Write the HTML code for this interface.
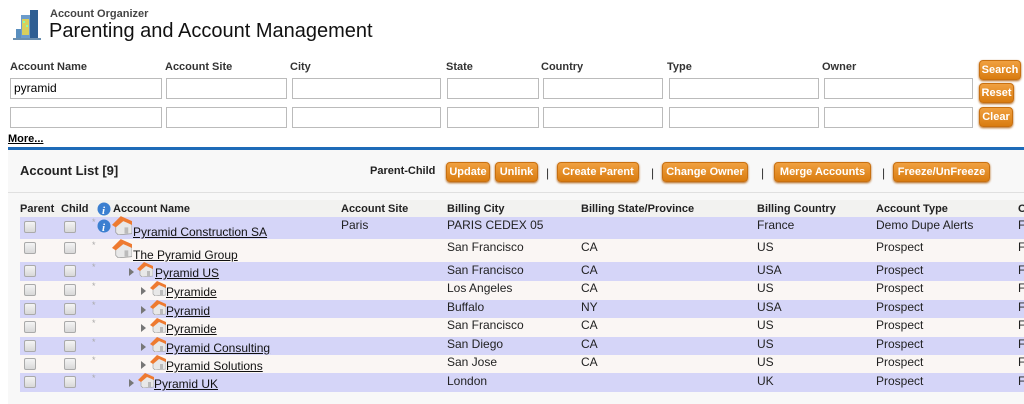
<!DOCTYPE html>
<html><head><style>
*{margin:0;padding:0;box-sizing:border-box}
body{width:1024px;height:404px;background:#fff;font-family:"Liberation Sans",Arial,sans-serif;font-size:12px;color:#000;position:relative;overflow:hidden}
.a{position:absolute;white-space:nowrap}
.lbl{font-weight:bold;font-size:11px;color:#333}
.in{position:absolute;height:21px;border:1px solid #bbb;background:#fff;font-size:12px;padding:2px 3px}
.btn{position:absolute;height:20px;border-radius:4px;background:linear-gradient(#f0a040,#d97c10);color:#fff;font-weight:bold;font-size:11px;text-align:center;line-height:19px;box-shadow:0 1px 2px #b06010;border:1px solid #c87010}
.row{position:absolute;left:20px;width:1004px}
.cb{position:absolute;width:12px;height:12px;border:1px solid #aaa;border-radius:2px;background:linear-gradient(#f4f4f4,#d8d8d8)}
.star{position:absolute;color:#aaa;font-size:9px}
.t{position:absolute;font-size:12px;color:#222}
.nm{position:absolute;text-decoration:underline;color:#111;font-size:12px}
.arr{position:absolute;width:0;height:0;border-left:5px solid #777;border-top:4px solid transparent;border-bottom:4px solid transparent}
.pipe{position:absolute;top:166px;color:#333;font-size:12px}
.hd{position:absolute;top:203px;font-weight:bold;font-size:11px;color:#222}
</style></head><body>
<svg class="a" style="left:11px;top:7px" width="32" height="34" viewBox="0 0 32 34">
<rect x="10" y="8" width="14" height="24" fill="#6c9ccc"/>
<polygon points="19,3 27,3 27,32 19,32" fill="#2f5f93"/>
<rect x="11" y="12" width="7" height="16" fill="#d9cf5c"/>
<rect x="12" y="14" width="2" height="2" fill="#8fa"/><rect x="15" y="18" width="2" height="2" fill="#8fa"/>
<rect x="5" y="22" width="5" height="10" fill="#5a8fbf"/>
<rect x="2" y="31" width="28" height="2" fill="#6a8fb0"/>
</svg>
<div class="a" style="left:50px;top:8px;font-size:11px;font-weight:bold;color:#444">Account Organizer</div>
<div class="a" style="left:49px;top:20px;font-size:20px;color:#111">Parenting and Account Management</div>

<div class="a lbl" style="left:10px;top:61px">Account Name</div>
<div class="a lbl" style="left:165px;top:61px">Account Site</div>
<div class="a lbl" style="left:290px;top:61px">City</div>
<div class="a lbl" style="left:446px;top:61px">State</div>
<div class="a lbl" style="left:541px;top:61px">Country</div>
<div class="a lbl" style="left:667px;top:61px">Type</div>
<div class="a lbl" style="left:822px;top:61px">Owner</div>

<div class="in" style="left:10px;top:78px;width:152px">pyramid</div>
<div class="in" style="left:166px;top:78px;width:121px"></div>
<div class="in" style="left:292px;top:78px;width:149px"></div>
<div class="in" style="left:447px;top:78px;width:92px"></div>
<div class="in" style="left:543px;top:78px;width:120px"></div>
<div class="in" style="left:669px;top:78px;width:150px"></div>
<div class="in" style="left:824px;top:78px;width:149px"></div>
<div class="in" style="left:10px;top:107px;width:152px"></div>
<div class="in" style="left:166px;top:107px;width:121px"></div>
<div class="in" style="left:292px;top:107px;width:149px"></div>
<div class="in" style="left:447px;top:107px;width:92px"></div>
<div class="in" style="left:543px;top:107px;width:120px"></div>
<div class="in" style="left:669px;top:107px;width:150px"></div>
<div class="in" style="left:824px;top:107px;width:149px"></div>

<div class="btn" style="left:979px;top:60px;width:42px">Search</div>
<div class="btn" style="left:979px;top:83px;width:35px">Reset</div>
<div class="btn" style="left:979px;top:107px;width:34px">Clear</div>

<div class="a" style="left:8px;top:133px;font-size:11px;font-weight:bold;text-decoration:underline">More...</div>
<div class="a" style="left:8px;top:147px;width:1016px;height:3px;background:#1e6bb8"></div>
<div class="a" style="left:8px;top:150px;width:1016px;height:254px;background:#f8f8f8"></div>
<div class="a" style="left:8px;top:192px;width:1016px;height:1px;background:#e0e0e0"></div>
<div class="a" style="left:20px;top:200px;width:1004px;height:17px;background:#f2f2f0"></div>
<div class="a" style="left:20px;top:163px;font-weight:bold;font-size:13px;color:#222">Account List [9]</div>

<div class="a lbl" style="left:370px;top:165px;color:#222">Parent-Child</div>
<div class="btn" style="left:446px;top:162px;width:44px">Update</div>
<div class="btn" style="left:495px;top:162px;width:43px">Unlink</div>
<div class="pipe" style="left:546px">|</div>
<div class="btn" style="left:557px;top:162px;width:82px">Create Parent</div>
<div class="pipe" style="left:651px">|</div>
<div class="btn" style="left:662px;top:162px;width:86px">Change Owner</div>
<div class="pipe" style="left:761px">|</div>
<div class="btn" style="left:774px;top:162px;width:97px">Merge Accounts</div>
<div class="pipe" style="left:882px">|</div>
<div class="btn" style="left:893px;top:162px;width:97px">Freeze/UnFreeze</div>

<div class="hd" style="left:20px">Parent</div>
<div class="hd" style="left:61px">Child</div>
<svg class="a" style="left:97px;top:202px" width="14" height="14"><circle cx="7" cy="7" r="6.5" fill="#3b7fd0"/><text x="5" y="12" font-size="11" font-style="italic" font-weight="bold" fill="#fff" font-family="Liberation Serif">i</text></svg>
<div class="hd" style="left:113px">Account Name</div>
<div class="hd" style="left:341px">Account Site</div>
<div class="hd" style="left:447px">Billing City</div>
<div class="hd" style="left:581px">Billing State/Province</div>
<div class="hd" style="left:757px">Billing Country</div>
<div class="hd" style="left:876px">Account Type</div>
<div class="hd" style="left:1018px">O</div>

<div class="row" style="top:217px;height:22px;background:#d5d5f8"></div>
<div class="row" style="top:239px;height:23px;background:#faf6f4"></div>
<div class="row" style="top:262px;height:19px;background:#d5d5f8"></div>
<div class="row" style="top:281px;height:19px;background:#faf6f4"></div>
<div class="row" style="top:300px;height:18px;background:#d5d5f8"></div>
<div class="row" style="top:318px;height:19px;background:#faf6f4"></div>
<div class="row" style="top:337px;height:18px;background:#d5d5f8"></div>
<div class="row" style="top:355px;height:18px;background:#faf6f4"></div>
<div class="row" style="top:373px;height:19px;background:#d5d5f8"></div>

<svg width="0" height="0" style="position:absolute"><defs>
<symbol id="h" viewBox="0 0 16 15"><polygon points="3,7 10,3 16,7 16,14 5,15 3,13" fill="#e8e8e8" stroke="#999" stroke-width=".6"/><polygon points="0,7 7,0 16,4 16,7 9,4 3,9" fill="#ee7a30"/><rect x="10" y="9" width="3" height="5" fill="#bbb"/></symbol>
</defs></svg>

<div class="cb" style="left:24px;top:221px"></div><div class="cb" style="left:64px;top:221px"></div><div class="star" style="left:92px;top:217px">*</div>
<svg class="a" style="left:97px;top:219px" width="14" height="14"><circle cx="7" cy="7" r="6.5" fill="#3b7fd0"/><text x="5" y="12" font-size="11" font-style="italic" font-weight="bold" fill="#fff" font-family="Liberation Serif">i</text></svg>
<svg class="a" style="left:112px;top:216px" width="20" height="19"><use href="#h"/></svg>
<div class="nm" style="left:133px;top:225px">Pyramid Construction SA</div>
<div class="t" style="left:341px;top:218px">Paris</div><div class="t" style="left:447px;top:218px">PARIS CEDEX 05</div><div class="t" style="left:757px;top:218px">France</div><div class="t" style="left:876px;top:218px">Demo Dupe Alerts</div><div class="t" style="left:1018px;top:218px">F</div>

<div class="cb" style="left:24px;top:242px"></div><div class="cb" style="left:64px;top:242px"></div><div class="star" style="left:92px;top:240px">*</div>
<svg class="a" style="left:112px;top:239px" width="20" height="19"><use href="#h"/></svg>
<div class="nm" style="left:133px;top:248px">The Pyramid Group</div>
<div class="t" style="left:447px;top:240px">San Francisco</div><div class="t" style="left:581px;top:240px">CA</div><div class="t" style="left:757px;top:240px">US</div><div class="t" style="left:876px;top:240px">Prospect</div><div class="t" style="left:1018px;top:240px">F</div>

<div class="cb" style="left:24px;top:265px"></div><div class="cb" style="left:64px;top:265px"></div><div class="star" style="left:92px;top:262px">*</div>
<div class="arr" style="left:129px;top:268px"></div><svg class="a" style="left:137px;top:262px" width="16" height="15"><use href="#h"/></svg>
<div class="nm" style="left:155px;top:266px">Pyramid US</div>
<div class="t" style="left:447px;top:263px">San Francisco</div><div class="t" style="left:581px;top:263px">CA</div><div class="t" style="left:757px;top:263px">USA</div><div class="t" style="left:876px;top:263px">Prospect</div><div class="t" style="left:1018px;top:263px">F</div>

<div class="cb" style="left:24px;top:284px"></div><div class="cb" style="left:64px;top:284px"></div><div class="star" style="left:92px;top:281px">*</div>
<div class="arr" style="left:141px;top:287px"></div><svg class="a" style="left:150px;top:281px" width="16" height="15"><use href="#h"/></svg>
<div class="nm" style="left:166px;top:285px">Pyramide</div>
<div class="t" style="left:447px;top:281px">Los Angeles</div><div class="t" style="left:581px;top:281px">CA</div><div class="t" style="left:757px;top:281px">US</div><div class="t" style="left:876px;top:281px">Prospect</div><div class="t" style="left:1018px;top:281px">F</div>

<div class="cb" style="left:24px;top:303px"></div><div class="cb" style="left:64px;top:303px"></div><div class="star" style="left:92px;top:300px">*</div>
<div class="arr" style="left:141px;top:306px"></div><svg class="a" style="left:150px;top:300px" width="16" height="15"><use href="#h"/></svg>
<div class="nm" style="left:166px;top:304px">Pyramid</div>
<div class="t" style="left:447px;top:300px">Buffalo</div><div class="t" style="left:581px;top:300px">NY</div><div class="t" style="left:757px;top:300px">USA</div><div class="t" style="left:876px;top:300px">Prospect</div><div class="t" style="left:1018px;top:300px">F</div>

<div class="cb" style="left:24px;top:321px"></div><div class="cb" style="left:64px;top:321px"></div><div class="star" style="left:92px;top:318px">*</div>
<div class="arr" style="left:141px;top:324px"></div><svg class="a" style="left:150px;top:318px" width="16" height="15"><use href="#h"/></svg>
<div class="nm" style="left:166px;top:322px">Pyramide</div>
<div class="t" style="left:447px;top:318px">San Francisco</div><div class="t" style="left:581px;top:318px">CA</div><div class="t" style="left:757px;top:318px">US</div><div class="t" style="left:876px;top:318px">Prospect</div><div class="t" style="left:1018px;top:318px">F</div>

<div class="cb" style="left:24px;top:340px"></div><div class="cb" style="left:64px;top:340px"></div><div class="star" style="left:92px;top:337px">*</div>
<div class="arr" style="left:141px;top:343px"></div><svg class="a" style="left:150px;top:337px" width="16" height="15"><use href="#h"/></svg>
<div class="nm" style="left:166px;top:341px">Pyramid Consulting</div>
<div class="t" style="left:447px;top:337px">San Diego</div><div class="t" style="left:581px;top:337px">CA</div><div class="t" style="left:757px;top:337px">US</div><div class="t" style="left:876px;top:337px">Prospect</div><div class="t" style="left:1018px;top:337px">F</div>

<div class="cb" style="left:24px;top:358px"></div><div class="cb" style="left:64px;top:358px"></div><div class="star" style="left:92px;top:355px">*</div>
<div class="arr" style="left:141px;top:361px"></div><svg class="a" style="left:150px;top:355px" width="16" height="15"><use href="#h"/></svg>
<div class="nm" style="left:166px;top:359px">Pyramid Solutions</div>
<div class="t" style="left:447px;top:355px">San Jose</div><div class="t" style="left:581px;top:355px">CA</div><div class="t" style="left:757px;top:355px">US</div><div class="t" style="left:876px;top:355px">Prospect</div><div class="t" style="left:1018px;top:355px">F</div>

<div class="cb" style="left:24px;top:376px"></div><div class="cb" style="left:64px;top:376px"></div><div class="star" style="left:92px;top:373px">*</div>
<div class="arr" style="left:129px;top:379px"></div><svg class="a" style="left:138px;top:373px" width="16" height="15"><use href="#h"/></svg>
<div class="nm" style="left:154px;top:377px">Pyramid UK</div>
<div class="t" style="left:447px;top:374px">London</div><div class="t" style="left:757px;top:374px">UK</div><div class="t" style="left:876px;top:374px">Prospect</div><div class="t" style="left:1018px;top:374px">F</div>
</body></html>
